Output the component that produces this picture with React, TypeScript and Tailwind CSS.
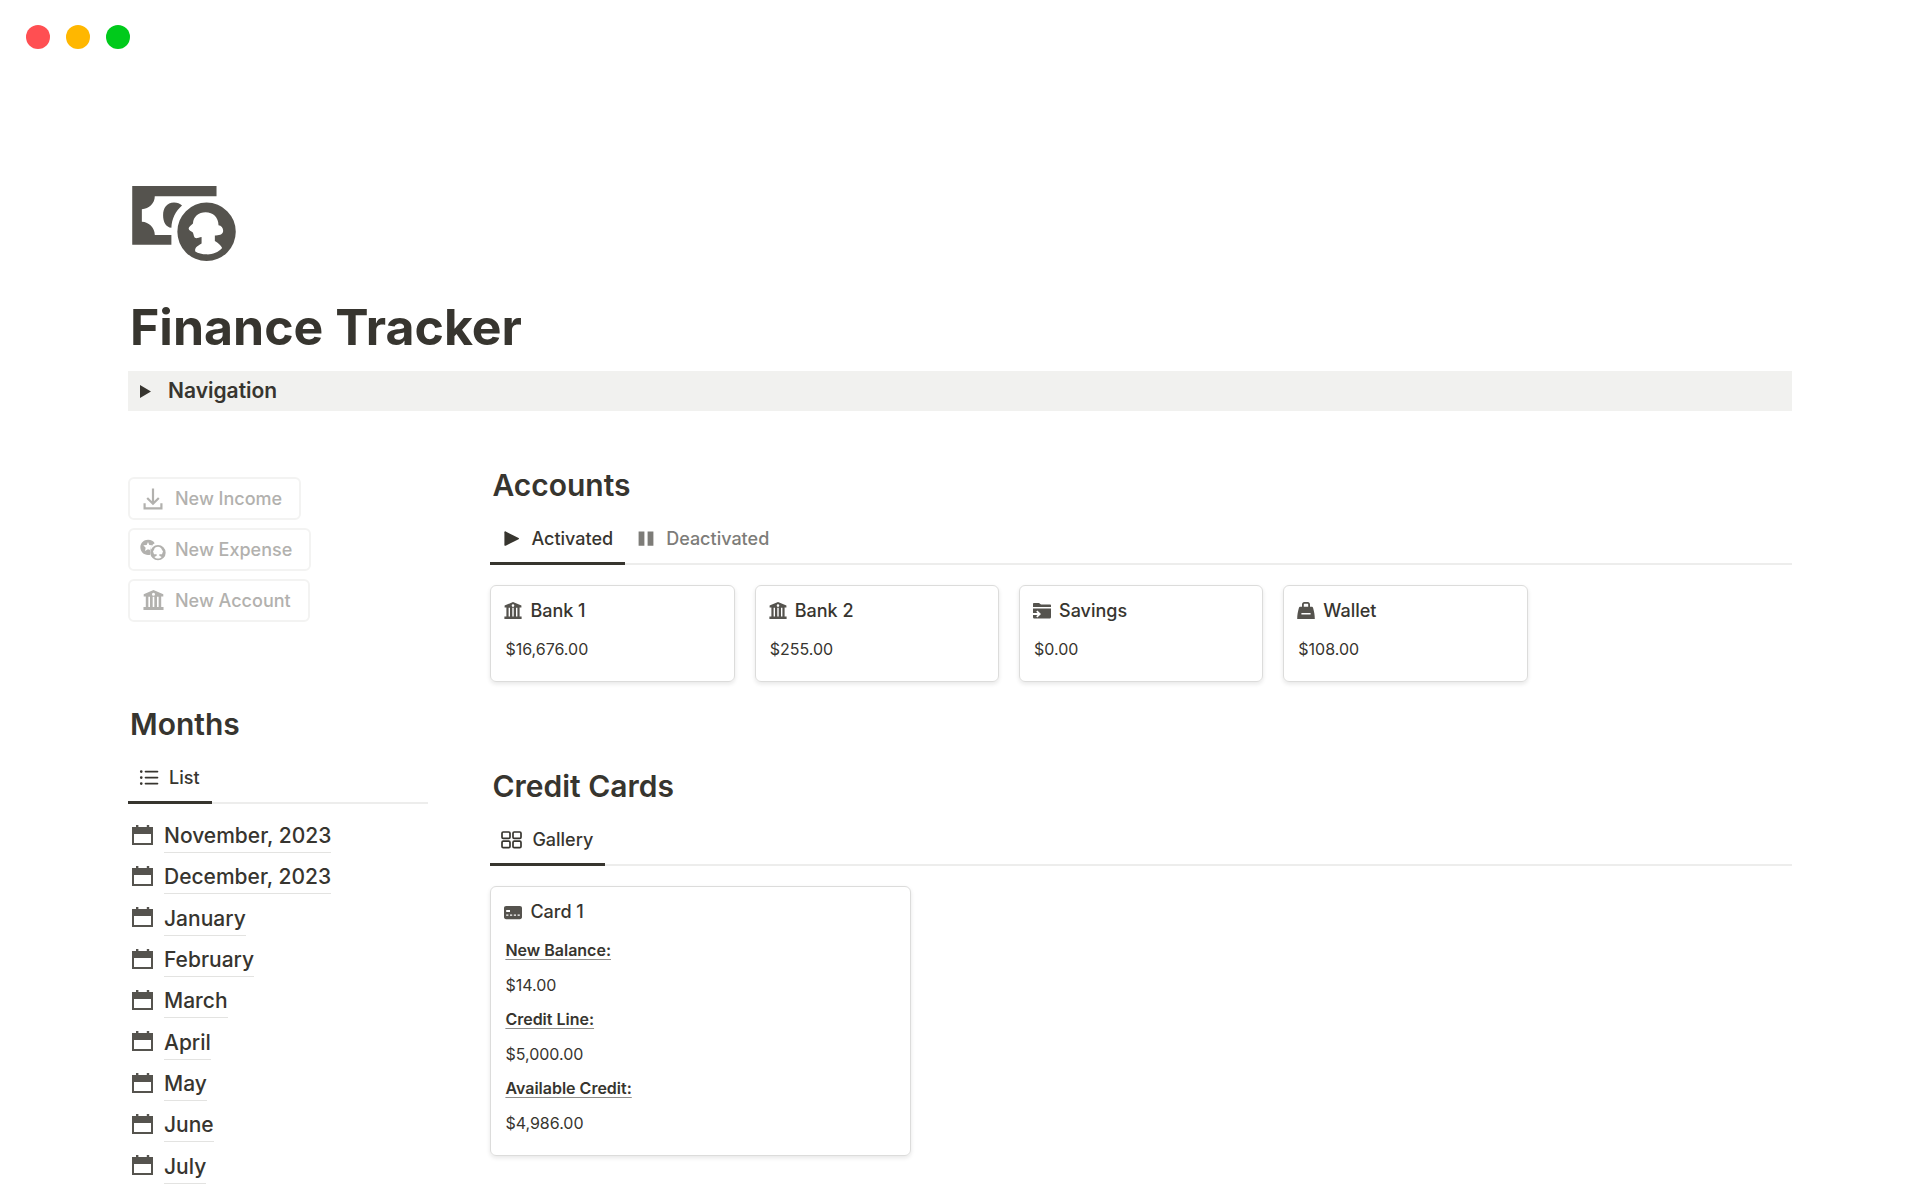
import type { ReactNode } from "react";

const accounts = [
    { id: 1, name: "Bank 1", balance: "$16,676.00", icon: <BankIcon /> },
    { id: 2, name: "Bank 2", balance: "$255.00", icon: <BankIcon /> },
    { id: 3, name: "Savings", balance: "$0.00", icon: <FolderIcon /> },
    { id: 4, name: "Wallet", balance: "$108.00", icon: <PurseIcon /> },
];

const creditCard = [
    { label: "New Balance:", value: "$14.00" },
    { label: "Credit Line:", value: "$5,000.00" },
    { label: "Available Credit:", value: "$4,986.00" },
];

const months = [
    "November, 2023",
    "December, 2023",
    "January",
    "February",
    "March",
    "April",
    "May",
    "June",
    "July",
];

function MoneyIcon() {
    return (
        <svg viewBox="66 45 312 226" className="ml-1 h-[75px] w-[104px]" fill="#55534e">
            <path d="M66 45H320V76H134C134 97 117 114 95 115V153C117 154 134 171 134 193H184V222H66Z" />
            <path d="M216 104C210 98 202 95 192 95C170 95 159 112 159 133C159 154 168 169 184 171C185 145 197 120 216 104Z" />
            <path
                fillRule="evenodd"
                d="M290 95A88 88 0 1 1 290 271A88 88 0 1 1 290 95ZM275 218V199C268 200 261 203 257 202C251 200 252 190 248 184C244 182 236 179 236 173C236 168 244 163 249 158C250 137 266 124 287 124C310 124 326 140 326 163C334 164 340 171 340 180C340 189 331 195 315 194V211C325 217 333 224 337 232C325 246 305 252 290 251C277 251 264 247 256 242C254 234 257 228 275 218Z"
            />
        </svg>
    );
}

function BankIcon() {
    return (
        <svg viewBox="0 0 18 17" className="h-full w-full" fill="currentColor">
            <path
                fillRule="evenodd"
                d="M9 0L17.4 3.6V5.6H15.6V14.4H17.6V17H0.4V14.4H2.4V5.6H0.6V3.6ZM9 2.3A1.3 1.3 0 1 0 9 4.9A1.3 1.3 0 1 0 9 2.3ZM4.6 5.8V14.4H6V5.8ZM8.3 5.8V14.4H9.7V5.8ZM12 5.8V14.4H13.4V5.8Z"
            />
        </svg>
    );
}

function FolderIcon() {
    return (
        <svg viewBox="0 0 18 17" className="h-full w-full" fill="currentColor">
            <path d="M0 5V2C0 1.3 .5 1 1 1H6L8 2.6H17C17.6 2.6 18 3 18 3.6V5Z" />
            <path
                fillRule="evenodd"
                d="M0 6.6H18V15C18 16 17.3 16.6 16.4 16.6H1.6C.7 16.6 0 16 0 15V12.9H4.6L3.2 14.3L4.4 15.5L8 12L4.4 8.5L3.2 9.7L4.6 11.1H0Z"
            />
        </svg>
    );
}

function PurseIcon() {
    return (
        <svg viewBox="0 0 18 17" className="h-full w-full" fill="currentColor">
            <path
                fillRule="evenodd"
                d="M5 4.8V2.4C5 .9 6 0 7.2 0H10.8C12 0 13 .9 13 2.4V4.8H14.4C15.4 4.8 15.9 5.3 16.2 6.2C17.2 9.6 17.8 13.5 17.8 17H.2C.2 13.5 .8 9.6 1.8 6.2C2.1 5.3 2.6 4.8 3.6 4.8ZM6.8 4.8H11.2V2.4C11.2 2 11 1.8 10.6 1.8H7.4C7 1.8 6.8 2 6.8 2.4ZM4.4 11V12.6H13.6V11Z"
            />
        </svg>
    );
}

function CreditCardIcon() {
    return (
        <svg viewBox="0 0 18 17" className="h-full w-full" fill="currentColor">
            <path
                fillRule="evenodd"
                d="M2.2 3H15.8C17.2 3 18 3.8 18 5.2V14C18 15.4 17.2 16.2 15.8 16.2H2.2C.8 16.2 0 15.4 0 14V5.2C0 3.8 .8 3 2.2 3ZM2.2 7V9H6V7ZM2.2 11.4V12.8H4.4V11.4ZM6 11.4V12.8H8.2V11.4ZM9.8 11.4V12.8H12V11.4ZM13.6 11.4V12.8H15.8V11.4Z"
            />
        </svg>
    );
}

function CalendarIcon() {
    return (
        <svg viewBox="0 0 21 20" className="mb-1 h-5 w-[21px] shrink-0" fill="#55534e">
            <path fillRule="evenodd" d="M0 2H4V0H6.4V2H14.8V0H17.2V2H21V20H0ZM2 9V18H19V9Z" />
        </svg>
    );
}

function DownloadIcon() {
    return (
        <svg viewBox="0 0 26 22" className="h-[22px] w-[26px]" fill="none" stroke="currentColor" strokeWidth="2.2">
            <path d="M13 .5V15.5M7.2 10L13 15.8L18.8 10M4.6 15.3V20.4H21.4V15.3" />
        </svg>
    );
}

function CoinsIcon() {
    return (
        <svg viewBox="0 0 78 66" className="h-[22px] w-[26px]" fill="currentColor">
            <path
                fillRule="evenodd"
                d="M24 2C34 2 41 6 44 13C36 17 31 25 31 35V47C29 48 26 48 24 48C11 48 1 38 1 25C1 12 11 2 24 2ZM24 9L20 18L10 19L17 26L15 36L24 31L29 33L33 24L38 19L28 18Z"
            />
            <path
                fillRule="evenodd"
                d="M54 18A23 23 0 1 1 54 64A23 23 0 1 1 54 18ZM50 50V46H42L39 37L42 33C43 26 48 23 54 23C60 23 65 27 66 33L69 37L66 46H58V50L65 54C59 60 49 60 43 54Z"
            />
        </svg>
    );
}

function ListIcon() {
    return (
        <svg viewBox="0 0 20 20" className="h-5 w-5" stroke="currentColor" strokeLinecap="round" fill="none">
            <path strokeWidth="1.7" d="M6.5 3.6H18.5M6.5 9.6H18.5M6.5 15.6H18.5" />
            <path strokeWidth="2.6" d="M2.2 3.6H2.3M2.2 9.6H2.3M2.2 15.6H2.3" />
        </svg>
    );
}

function GalleryIcon() {
    return (
        <svg viewBox="0 0 21 18" className="h-[18px] w-[21px]" stroke="currentColor" strokeWidth="1.7" fill="none">
            <rect x="1" y="1" width="8" height="6.4" rx="1.2" />
            <rect x="12" y="1" width="8" height="6.4" rx="1.2" />
            <rect x="1" y="10.2" width="8" height="6.4" rx="1.2" />
            <rect x="12" y="10.2" width="8" height="6.4" rx="1.2" />
        </svg>
    );
}

function PlayIcon() {
    return (
        <svg viewBox="0 0 20 20" className="h-5 w-5" fill="currentColor">
            <path d="M3.4 3.2C3.4 2.4 4 2.2 4.7 2.5L17.6 8.9C18.2 9.3 18.2 9.9 17.6 10.3L4.7 16.7C4 17 3.4 16.8 3.4 16Z" />
        </svg>
    );
}

function PauseIcon() {
    return (
        <svg viewBox="0 0 20 20" className="h-5 w-5" fill="currentColor">
            <path d="M2.6 2.4H8.4V16.8H2.6ZM11.6 2.4H17.4V16.8H11.6Z" />
        </svg>
    );
}

const Heading = ({ children }: { children: ReactNode }) => (
    <h2 className="pl-[2px] text-[30px] leading-10 font-semibold">{children}</h2>
);

const Tabs = ({ children }: { children: ReactNode }) => (
    <div className="mt-[10px] flex h-[50px] border-b-2 border-[#ededec]">{children}</div>
);

const Tab = ({ icon, label, active }: { icon: ReactNode; label: string; active?: boolean }) => (
    <button
        className={`flex h-[50px] items-center gap-[10px] border-b-[3px] pr-3 pl-[11px] text-lg font-medium ${
            active ? "border-[#37352f] text-[#37352f]" : "border-transparent text-[#7d7c78]"
        }`}
    >
        {icon}
        {label}
    </button>
);

const NewButton = ({ icon, label }: { icon: ReactNode; label: string }) => (
    <button className="flex h-[43px] items-center gap-[9px] rounded-md border-2 border-[#f3f3f2] pr-[17px] pl-[10px] text-lg font-medium text-[#b2b1ae]">
        <span className="flex w-[26px] justify-center">{icon}</span>
        {label}
    </button>
);

const Card = ({ icon, title, children }: { icon: ReactNode; title: string; children: ReactNode }) => (
    <article className="rounded-md border border-[#dcdcdb] px-[14px] pt-3 pb-[15px] shadow-[0_2px_4px_rgba(15,15,15,0.1)]">
        <h3 className="mb-2 -ml-px flex h-[26px] items-center gap-2 text-lg font-medium">
            <span className="mb-0.5 h-[17px] w-[18px] text-[#55534e]">{icon}</span>
            {title}
        </h3>
        {children}
    </article>
);

export default function App() {
    return (
        <div className="min-h-screen bg-white font-['Inter',sans-serif] text-[#37352f]">
            <div className="flex gap-4 px-[26px] pt-[25px]">
                <span className="h-6 w-6 rounded-full bg-[#ff4f52]" />
                <span className="h-6 w-6 rounded-full bg-[#ffb700]" />
                <span className="h-6 w-6 rounded-full bg-[#00ca1b]" />
            </div>

            <main className="px-32 pt-[137px]">
                <MoneyIcon />
                <h1 className="mt-[34px] pl-[2px] text-[50px] leading-[64px] font-bold">Finance Tracker</h1>

                <button className="mt-3 flex h-10 w-full items-center gap-[17px] bg-[#f1f1ef] pl-3 text-left text-[21px] font-semibold">
                    <svg viewBox="0 0 11 13" className="h-[13px] w-[11px]" fill="currentColor">
                        <path d="M0 0L11 6.5L0 13Z" />
                    </svg>
                    Navigation
                </button>

                <div className="mt-[54px] grid grid-cols-[3fr_13fr] gap-[62px]">
                    <aside>
                        <div className="flex flex-col items-start gap-2 pt-3">
                            <NewButton icon={<DownloadIcon />} label="New Income" />
                            <NewButton icon={<CoinsIcon />} label="New Expense" />
                            <NewButton
                                icon={
                                    <span className="mb-0.5 h-5 w-[21px]">
                                        <BankIcon />
                                    </span>
                                }
                                label="New Account"
                            />
                        </div>

                        <section className="mt-[82px]">
                            <Heading>Months</Heading>
                            <Tabs>
                                <Tab icon={<ListIcon />} label="List" active />
                            </Tabs>
                            <ul className="mt-3">
                                {months.map((month) => (
                                    <li
                                        key={month}
                                        className="flex h-[41px] items-center gap-[11px] pl-1 nth-[3n]:h-[42px]"
                                    >
                                        <CalendarIcon />
                                        <a href="#" className="border-b border-[#e3e3e1] text-[21px] leading-8 font-medium">
                                            {month}
                                        </a>
                                    </li>
                                ))}
                            </ul>
                        </section>
                    </aside>

                    <div>
                        <section>
                            <Heading>Accounts</Heading>
                            <Tabs>
                                <Tab icon={<PlayIcon />} label="Activated" active />
                                <Tab icon={<PauseIcon />} label="Deactivated" />
                            </Tabs>
                            <div className="mt-5 grid grid-cols-5 gap-5">
                                {accounts.map((account) => (
                                    <Card key={account.id} icon={account.icon} title={account.name}>
                                        <p className="text-base leading-[34px]">{account.balance}</p>
                                    </Card>
                                ))}
                            </div>
                        </section>

                        <section className="mt-[84px]">
                            <Heading>Credit Cards</Heading>
                            <Tabs>
                                <Tab icon={<GalleryIcon />} label="Gallery" active />
                            </Tabs>
                            <div className="mt-5 grid grid-cols-3 gap-5">
                                <Card icon={<CreditCardIcon />} title="Card 1">
                                    <dl className="text-base">
                                        {creditCard.map((row) => (
                                            <div key={row.label}>
                                                <dt className="leading-[35px] font-semibold underline decoration-[#8f8e8b] decoration-1 underline-offset-3">
                                                    {row.label}
                                                </dt>
                                                <dd className="leading-[34px]">{row.value}</dd>
                                            </div>
                                        ))}
                                    </dl>
                                </Card>
                            </div>
                        </section>
                    </div>
                </div>
            </main>
        </div>
    );
}
